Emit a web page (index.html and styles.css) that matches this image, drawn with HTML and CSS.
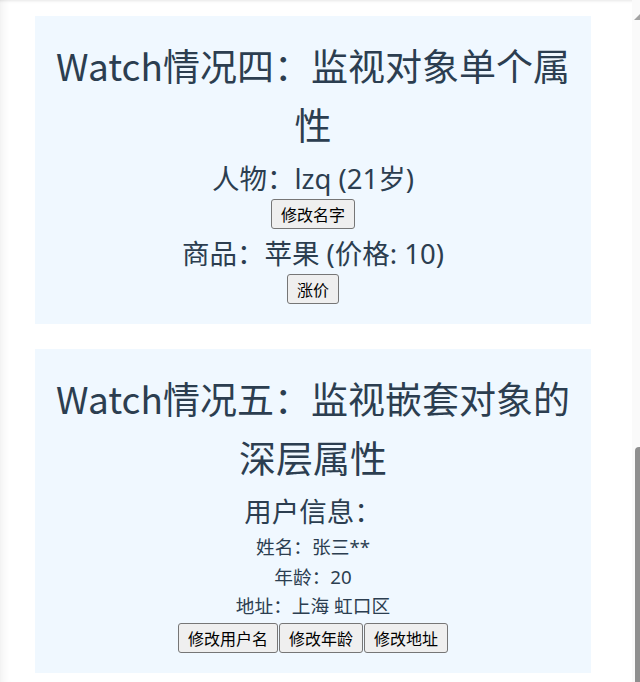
FILE: index.html
```html
<!DOCTYPE html>
<html lang="zh-CN">
<head>
    <meta charset="UTF-8">
    <meta name="viewport" content="width=device-width, initial-scale=1.0">
    <title>Watch</title>
    <link rel="stylesheet" href="styles.css">
</head>
<body>
    <div class="frame">
        <div class="page">
            <div class="card">
                <h2>Watch情况四：监视对象单个属性</h2>
                <h3>人物：lzq (21岁)</h3>
                <button>修改名字</button>
                <h3>商品：苹果 (价格: 10)</h3>
                <button>涨价</button>
            </div>
            <div class="card">
                <h2>Watch情况五：监视嵌套对象的深层属性</h2>
                <h3>用户信息：</h3>
                <div class="info">
                    <p>姓名：张三**</p>
                    <p>年龄：20</p>
                    <p>地址：上海 虹口区</p>
                </div>
                <div class="actions"><button>修改用户名</button><button>修改年龄</button><button>修改地址</button></div>
            </div>
        </div>
        <div class="scrollbar">
            <span class="arrow"></span>
            <span class="thumb"></span>
        </div>
    </div>
</body>
</html>
```

FILE: styles.css
```css
body {
    margin: 0;
    padding: 0;
    background-color: #ffffff;
    font-family: "Noto Sans CJK SC", "Noto Sans", sans-serif;
    color: #2c3e50;
}

.frame {
    position: relative;
    height: 682px;
    overflow: hidden;
    box-shadow: inset 10px 0 10px -8px rgba(0, 0, 0, 0.07), inset 0 3px 3px -2px rgba(0, 0, 0, 0.1);
}

.page {
    padding-top: 16px;
}

.card {
    width: 516px;
    margin: 0 0 25px 35px;
    padding: 20px;
    background-color: #f0f8ff;
    text-align: center;
}

.card h2 {
    margin: 0;
    font-size: 37px;
    font-weight: normal;
    line-height: 59px;
}

.card h3 {
    margin: 7px 0 2px;
    font-family: "Noto Sans", "Noto Sans CJK SC", sans-serif;
    font-size: 27.5px;
    font-weight: normal;
    line-height: 36px;
}

.card button {
    height: 30px;
    padding: 0 9px;
    font-family: "Noto Sans CJK SC", sans-serif;
    font-size: 16px;
    line-height: 28px;
    color: #000000;
    background-color: #efefef;
    border: 1px solid #767676;
    border-radius: 3px;
}

.info p {
    margin: 0;
    font-family: "Noto Sans", "Noto Sans CJK SC", sans-serif;
    font-size: 18.7px;
    line-height: 29.5px;
}

.actions {
    display: flex;
    justify-content: center;
    gap: 1px;
    margin-top: 2px;
}

.scrollbar {
    position: absolute;
    top: 0;
    right: 0;
    bottom: 0;
    width: 8px;
    background-color: #fafafa;
}

.arrow {
    position: absolute;
    top: 14px;
    left: 2px;
    border-left: 6px solid transparent;
    border-right: 6px solid transparent;
    border-bottom: 6px solid #a3a3a3;
}

.thumb {
    position: absolute;
    top: 447px;
    bottom: 0;
    left: 3px;
    width: 10px;
    background-color: #8f8f8f;
    border-radius: 4px 4px 0 0;
}
```
